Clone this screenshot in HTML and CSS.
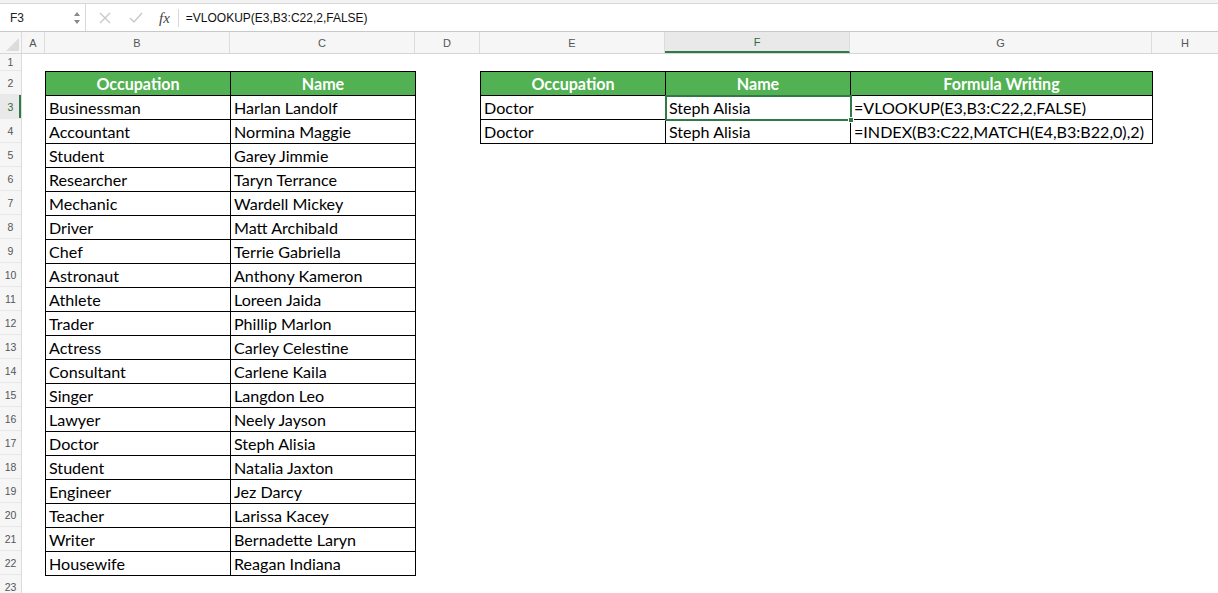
FILE: index.html
```html
<!DOCTYPE html>
<html>
<head>
<meta charset="utf-8">
<link rel="stylesheet" href="styles.css">
</head>
<body>
<div class="topstrip"></div>
<div class="fbar">
  <div class="namebox"><span class="nb-text">F3</span>
    <svg class="spin" width="8" height="16" viewBox="0 0 8 16"><path d="M4 2 L7 6 L1 6 Z" fill="#888"/><path d="M1 10 L7 10 L4 14 Z" fill="#888"/></svg>
  </div>
  <div class="fbtns">
    <svg width="12" height="12" viewBox="0 0 12 12"><path d="M1 1 L11 11 M11 1 L1 11" stroke="#c8c8c8" stroke-width="1.4"/></svg>
    <svg width="14" height="12" viewBox="0 0 14 12"><path d="M1 6 L5 10 L13 1" stroke="#c8c8c8" stroke-width="1.4" fill="none"/></svg>
    <span class="fx">fx</span>
  </div>
  <div class="ftext">=VLOOKUP(E3,B3:C22,2,FALSE)</div>
</div>
<div class="colheads">
  <div class="corner"><svg width="22" height="22" viewBox="0 0 22 22"><path d="M19 6 L19 19 L6 19 Z" fill="#dcdcdc"/></svg></div>
  <div class="ch w-a">A</div>
  <div class="ch w-b">B</div>
  <div class="ch w-b">C</div>
  <div class="ch w-d">D</div>
  <div class="ch w-b">E</div>
  <div class="ch w-b sel">F</div>
  <div class="ch w-g">G</div>
  <div class="ch w-h">H</div>
</div>
<div class="body">
  <div class="rowheads">
    <div class="rh r1">1</div>
    <div class="rh">2</div>
    <div class="rh sel">3</div>
    <div class="rh">4</div>
    <div class="rh">5</div>
    <div class="rh">6</div>
    <div class="rh">7</div>
    <div class="rh">8</div>
    <div class="rh">9</div>
    <div class="rh">10</div>
    <div class="rh">11</div>
    <div class="rh">12</div>
    <div class="rh">13</div>
    <div class="rh">14</div>
    <div class="rh">15</div>
    <div class="rh">16</div>
    <div class="rh">17</div>
    <div class="rh">18</div>
    <div class="rh">19</div>
    <div class="rh">20</div>
    <div class="rh">21</div>
    <div class="rh">22</div>
    <div class="rh">23</div>
  </div>
  <div class="cells">
    <div class="tbl t1">
      <div class="c hd">Occupation</div><div class="c hd">Name</div>
      <div class="c">Businessman</div><div class="c">Harlan Landolf</div>
      <div class="c">Accountant</div><div class="c">Normina Maggie</div>
      <div class="c">Student</div><div class="c">Garey Jimmie</div>
      <div class="c">Researcher</div><div class="c">Taryn Terrance</div>
      <div class="c">Mechanic</div><div class="c">Wardell Mickey</div>
      <div class="c">Driver</div><div class="c">Matt Archibald</div>
      <div class="c">Chef</div><div class="c">Terrie Gabriella</div>
      <div class="c">Astronaut</div><div class="c">Anthony Kameron</div>
      <div class="c">Athlete</div><div class="c">Loreen Jaida</div>
      <div class="c">Trader</div><div class="c">Phillip Marlon</div>
      <div class="c">Actress</div><div class="c">Carley Celestine</div>
      <div class="c">Consultant</div><div class="c">Carlene Kaila</div>
      <div class="c">Singer</div><div class="c">Langdon Leo</div>
      <div class="c">Lawyer</div><div class="c">Neely Jayson</div>
      <div class="c">Doctor</div><div class="c">Steph Alisia</div>
      <div class="c">Student</div><div class="c">Natalia Jaxton</div>
      <div class="c">Engineer</div><div class="c">Jez Darcy</div>
      <div class="c">Teacher</div><div class="c">Larissa Kacey</div>
      <div class="c">Writer</div><div class="c">Bernadette Laryn</div>
      <div class="c">Housewife</div><div class="c">Reagan Indiana</div>
    </div>
    <div class="tbl t2">
      <div class="c hd">Occupation</div><div class="c hd">Name</div><div class="c hd">Formula Writing</div>
      <div class="c">Doctor</div><div class="c active">Steph Alisia<span class="handle"></span></div><div class="c">=VLOOKUP(E3,B3:C22,2,FALSE)</div>
      <div class="c">Doctor</div><div class="c">Steph Alisia</div><div class="c">=INDEX(B3:C22,MATCH(E4,B3:B22,0),2)</div>
    </div>
  </div>
</div>
</body>
</html>
```

FILE: styles.css
```css
* { box-sizing: border-box; }
html, body { margin: 0; padding: 0; background: #fff; overflow: hidden; }
body { width: 1218px; height: 593px; font-family: "Liberation Sans", Arial, sans-serif; }

.topstrip { height: 4px; background: #f3f3f3; border-bottom: 1px solid #d8d8d8; }

.fbar { height: 28px; display: flex; align-items: center; background: #fff; border-bottom: 1px solid #c8c8c8; box-shadow: 0 1px 0 #e6e6e6; }
.namebox { width: 86px; height: 100%; display: flex; align-items: center; justify-content: space-between; padding: 0 4px 0 10px; border-right: 1px solid #d8d8d8; }
.nb-text { font-size: 12px; color: #222; }
.spin { display: block; }
.fbtns { display: flex; align-items: center; height: 100%; padding-left: 13px; }
.fbtns svg:nth-child(1) { margin-right: 18px; }
.fbtns svg:nth-child(2) { margin-right: 16px; }
.fx { font-family: "Liberation Serif", serif; font-style: italic; font-size: 15px; color: #444; padding-right: 8px; border-right: 1px solid #d8d8d8; line-height: 18px; }
.ftext { font-size: 12px; color: #111; padding-left: 7px; }

.colheads { display: flex; height: 22px; background: #f6f6f6; border-bottom: 1px solid #d6d6d6; }
.corner { width: 22px; border-right: 1px solid #dcdcdc; }
.corner svg { display: block; }
.ch { display: flex; align-items: center; justify-content: center; font-size: 11px; color: #555; border-right: 1px solid #dcdcdc; }
.w-a { width: 23px; }
.w-b { width: 185px; }
.w-d { width: 65px; }
.w-g { width: 302px; }
.w-h { width: 66px; border-right: none; }
.ch.sel { background: #e9e9e9; border-bottom: 2px solid #2f7a45; color: #2f6b3f; }

.body { display: flex; }
.rowheads { width: 22px; background: #f6f6f6; border-right: 1px solid #dcdcdc; display: flex; flex-direction: column; }
.rh { height: 24px; display: flex; align-items: center; justify-content: center; font-size: 10.5px; color: #555; border-bottom: 1px solid #e8e8e8; }
.rh.r1 { height: 17px; }
.rh.sel { background: #e9e9e9; box-shadow: inset -2px 0 0 #2f7a45; color: #2f6b3f; }

.cells { display: flex; align-items: flex-start; gap: 64px; padding: 17px 0 0 23px; }

.tbl { display: grid; border-left: 1px solid #000; border-top: 1px solid #000; }
.t1 { grid-template-columns: 185px 185px; }
.t2 { grid-template-columns: 185px 185px 302px; }
.c { height: 24px; border-right: 1px solid #000; border-bottom: 1px solid #000; font-family: Lato, "Liberation Sans", sans-serif; font-size: 16.1px; color: #000; padding-left: 3px; display: flex; align-items: center; white-space: nowrap; position: relative; }
.c.hd { background: #52b152; color: #fff; font-weight: bold; justify-content: center; padding-left: 0; }
.c.active { outline: 2px solid #2f7a45; outline-offset: -1px; z-index: 1; }
.handle { position: absolute; right: -4px; bottom: -4px; width: 6px; height: 6px; background: #2f7a45; border: 1px solid #fff; }
```
